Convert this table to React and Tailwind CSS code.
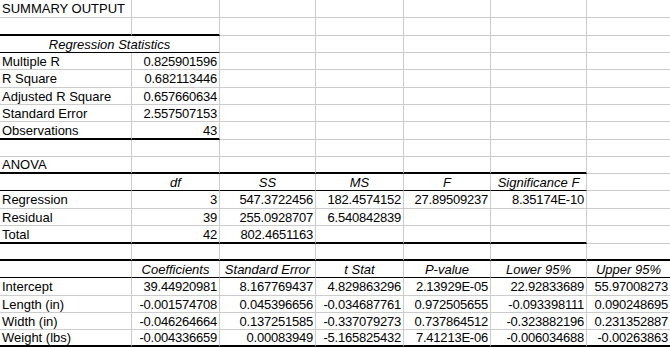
import React from 'react';

// row heights in px, 20 rows fill the 347px window
const ROW_H = { 17: 'h-[17px]', 18: 'h-[18px]' };
const HEIGHTS = [18, 18, 17, 17, 18, 17, 17, 18, 17, 17, 17, 18, 17, 18, 17, 17, 18, 17, 17, 17];

const rows = [
  { c: ['SUMMARY OUTPUT'] },
  { c: [], thick: 2 },
  { merge: 'Regression Statistics', thin: 2 },
  { c: ['Multiple R', '0.825901596'] },
  { c: ['R Square', '0.682113446'] },
  { c: ['Adjusted R Square', '0.657660634'] },
  { c: ['Standard Error', '2.557507153'] },
  { c: ['Observations', '43'], thick: 2 },
  { c: [] },
  { c: ['ANOVA'], thick: 6 },
  { h: ['', 'df', 'SS', 'MS', 'F', 'Significance F'], thin: 6 },
  { c: ['Regression', '3', '547.3722456', '182.4574152', '27.89509237', '8.35174E-10'] },
  { c: ['Residual', '39', '255.0928707', '6.540842839'] },
  { c: ['Total', '42', '802.4651163'], thick: 6 },
  { c: [], thick: 7 },
  { h: ['', 'Coefficients', 'Standard Error', 't Stat', 'P-value', 'Lower 95%', 'Upper 95%'], thin: 7 },
  { c: ['Intercept', '39.44920981', '8.167769437', '4.829863296', '2.13929E-05', '22.92833689', '55.97008273'] },
  { c: ['Length (in)', '-0.001574708', '0.045396656', '-0.034687761', '0.972505655', '-0.093398111', '0.090248695'] },
  { c: ['Width (in)', '-0.046264664', '0.137251585', '-0.337079273', '0.737864512', '-0.323882196', '0.231352887'] },
  { c: ['Weight (lbs)', '-0.004336659', '0.00083949', '-5.165825432', '7.41213E-06', '-0.006034688', '-0.00263863'], thick: 7 },
];

function bottomClass(row, col) {
  if (row.thick && col < row.thick) return 'border-b-2 border-b-black';
  if (row.thin && col < row.thin) return 'border-b border-b-black';
  return 'border-b border-b-[#cccccc]';
}

function Cell({ row, col, text, header, span }) {
  const align = header
    ? 'justify-center italic'
    : col === 0
    ? 'justify-start'
    : 'justify-end tracking-[-0.22px]';
  return (
    <div
      className={`flex items-center px-[2px] whitespace-nowrap ${align} ${bottomClass(row, col)} ${
        col + (span || 1) < 7 ? 'border-r border-r-[#cccccc]' : ''
      } ${span === 2 ? 'col-span-2' : ''}`}
    >
      {text}
    </div>
  );
}

function Row({ row, height }) {
  const cells = [];
  if (row.merge) {
    cells.push(<Cell key="m" row={row} col={0} span={2} header text={row.merge} />);
    for (let i = 2; i < 7; i++) cells.push(<Cell key={i} row={row} col={i} text="" />);
  } else {
    const vals = row.h || row.c;
    for (let i = 0; i < 7; i++) {
      cells.push(<Cell key={i} row={row} col={i} header={!!row.h && i > 0} text={vals[i] || ''} />);
    }
  }
  return (
    <div className={`grid grid-cols-[132px_88px_96px_88px_87px_96px_1fr] ${ROW_H[height]}`}>
      {cells}
    </div>
  );
}

export default function App() {
  return (
    <div className="w-[670px] h-[347px] overflow-hidden bg-white text-black font-['Liberation_Sans',Arial,sans-serif] text-[13px] leading-none">
      {rows.map((row, i) => (
        <Row key={i} row={row} height={HEIGHTS[i]} />
      ))}
    </div>
  );
}
